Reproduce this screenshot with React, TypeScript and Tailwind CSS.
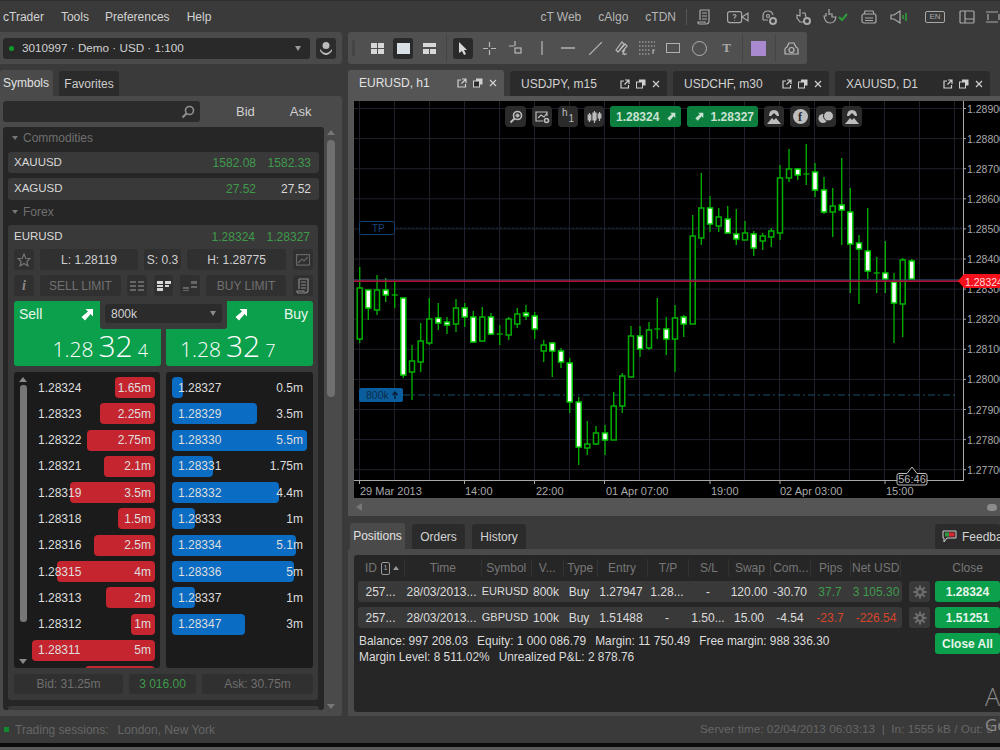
import React from "react";

// [x, wickTop, wickBottom, bodyTop, bodyBottom, filled]
const raw: [number, number, number, number, number, number][] = [
  [359.7,267,343,288,339,0],[368.3,290,320,290,308,1],[377,275,315,290,310,0],[385.7,278,302,290,295,1],[394.7,282,308,295,295,2],
  [403.3,298,378,298,375,1],[412,345,400,361,372,0],[420.7,323,372,341,362,0],[429.3,298,345,319,343,0],[438.3,303,330,318,323,1],
  [447,317,334,322,324,1],[456,299,332,308,324,0],[464.7,303,327,308,317,1],[473.3,311,342,317,342,1],[482.3,307,342,317,341,0],
  [491,313,335,317,334,1],[499.7,325,345,334,334,2],[508.7,317,340,319,335,0],[517.3,308,328,314,324,0],[526,305,320,313,315,1],
  [534.7,312,339,316,329,1],[543.7,340,362,345,351,0],[552.3,342,377,343,351,1],[561,348,368,351,362,1],[569.7,358,413,363,402,1],
  [578.7,397,465,402,447,1],[587.3,421,455,444,448,0],[596,426,445,433,444,0],[605,425,455,433,440,1],[613.7,392,440,406,440,0],
  [622.3,373,413,376,406,0],[631,326,377,336,377,0],[640,326,357,336,349,1],[649,322,350,330,348,0],[657.3,298,339,329,329,2],
  [666.3,317,355,329,339,1],[675,305,372,318,339,0],[683.7,315,337,317,324,1],[692.7,215,324,236,324,0],[701.3,173,245,208,238,0],
  [710,196,232,208,224,1],[718.7,208,232,217,226,0],[727.7,206,233,219,233,1],[736.3,209,245,234,239,1],[745,221,240,233,240,0],
  [753.7,231,256,234,248,1],[762.7,233,250,236,241,0],[771.3,228,247,231,237,0],[780,165,240,178,233,0],[789,149,182,169,178,0],
  [797.7,168,180,169,175,1],[806.3,144,185,174,174,2],[815,163,197,172,190,1],[824,177,214,190,212,1],[832.7,188,237,206,212,0],
  [841.7,158,245,205,210,1],[850.3,188,293,212,244,1],[859,235,304,243,249,1],[867.7,208,279,251,271,1],[876.7,257,293,273,273,2],
  [885.3,241,293,273,279,1],[894,273,343,282,303,1],[902.7,258,337,260,304,0],[911.7,259,280,261,279,1],
];
const priceLabels = ["1.28900","1.28800","1.28700","1.28600","1.28500","1.28400","1.28300","1.28200","1.28100","1.28000","1.27900","1.27800","1.27700"];

function Chart() {
  const hs = priceLabels.map((_, i) => 108.5 + i * 30.1);
  const vs = Array.from({ length: 18 }, (_, i) => 359.5 + i * 35);
  return (
    <svg width={646} height={397} viewBox="354 101 646 397" className="block bg-black">
      {hs.map((y) => <line key={y} x1={354} x2={963} y1={y} y2={y} stroke="#20202c" strokeWidth={1} />)}
      {vs.map((x) => <line key={x} x1={x} x2={x} y1={101} y2={480} stroke="#20202c" strokeWidth={1} />)}
      <line x1={396} x2={963} y1={228} y2={228} stroke="#1a2a48" strokeWidth={1} strokeDasharray="2 2" />
      <line x1={403} x2={958} y1={395} y2={395} stroke="#17506f" strokeWidth={1} strokeDasharray="7 3 2 3" />
      {raw.map(([x, wt, wb, bt, bb, f]) => (
        <g key={x}>
          <line x1={x} x2={x} y1={wt} y2={wb} stroke="#00a800" strokeWidth={1.4} />
          {f === 2 ? (
            <line x1={x - 3} x2={x + 3} y1={bt} y2={bt} stroke="#00a800" strokeWidth={1.4} />
          ) : (
            <rect x={x - 2.5} y={bt} width={5} height={Math.max(bb - bt, 3)} fill={f ? "#ffffff" : "#000000"} stroke={f ? "#00d000" : "#00b000"} strokeWidth={1.5} />
          )}
        </g>
      ))}
      <line x1={354} x2={960} y1={280} y2={280} stroke="#3f5f8a" strokeWidth={1} />
      <line x1={354} x2={960} y1={281.3} y2={281.3} stroke="#b01030" strokeWidth={1.4} />
      <line x1={963.5} x2={963.5} y1={101} y2={480.5} stroke="#a8a8a8" strokeWidth={1} />
      <line x1={354} x2={964} y1={480.5} y2={480.5} stroke="#a8a8a8" strokeWidth={1} />
      {priceLabels.map((l, i) => (
        <g key={l}>
          <line x1={963} x2={966} y1={hs[i]} y2={hs[i]} stroke="#a8a8a8" />
          <text x={967} y={hs[i] + 4} fill="#a9a9a9" fontSize={10.5} fontFamily="Liberation Sans, sans-serif">{l}</text>
        </g>
      ))}
      {[[359.5,"29 Mar 2013",360],[464.5,"14:00",465],[534.5,"22:00",536],[604.5,"01 Apr 07:00",606],[710,"19:00",711],[780,"02 Apr 03:00",780],[885,"15:00",886]].map(([x, t, tx]) => (
        <g key={t as string}>
          <line x1={x as number} x2={x as number} y1={480} y2={484} stroke="#a8a8a8" />
          <text x={tx as number} y={495} fill="#a9a9a9" fontSize={11} fontFamily="Liberation Sans, sans-serif">{t as string}</text>
        </g>
      ))}
      <path d="M899 473.5 H907 L912 467 L917 473.5 H925 Q927 473.5 927 475.5 V483 Q927 485 925 485 H899 Q897 485 897 483 V475.5 Q897 473.5 899 473.5 Z" fill="#000" stroke="#bdbdbd" />
      <text x={912} y={483} textAnchor="middle" fill="#b5b5b5" fontSize={11} fontFamily="Liberation Sans, sans-serif">56:46</text>
      <rect x={359.5} y={221.5} width={35} height={13} rx={2} fill="#000" stroke="#14406e" />
      <text x={372} y={232} fill="#15457a" fontSize={10} fontFamily="Liberation Sans, sans-serif">TP</text>
      <rect x={359} y={388} width={44} height={14} rx={2} fill="#0b5e9e" />
      <text x={366} y={399} fill="#0f2c48" fontSize={10.5} fontFamily="Liberation Sans, sans-serif">800k</text>
      <path d="M395 399 V393 M392.5 395 L395 392 L397.5 395" stroke="#0b1f33" strokeWidth={1.4} fill="none" />
      <path d="M958 281 L964 274 H1000 V288 H964 Z" fill="#f4111c" />
      <text x={965} y={285.5} fill="#ffd9d9" fontSize={10.5} fontFamily="Liberation Sans, sans-serif">1.28324</text>
    </svg>
  );
}

const Ico = ({ w = 16, h = 16, children, vb, className = "" }: { w?: number; h?: number; children: React.ReactNode; vb?: string; className?: string }) => (
  <svg width={w} height={h} viewBox={vb ?? `0 0 ${w} ${h}`} fill="none" stroke="currentColor" strokeWidth={1.2} className={"block shrink-0 " + className}>{children}</svg>
);

const Scroll = () => (<Ico w={16} h={18}><path d="M4 2 H13 V13 Q13 16 10 16 H3 Q2 16 2 14 H9 V15 M4 2 V12 M6 5 H11 M6 8 H11 M6 11 H11" /></Ico>);
const ArrowUR = ({ c = "#fff", s = 13 }: { c?: string; s?: number }) => (
  <svg width={s} height={s} viewBox="0 0 13 13" className="block shrink-0"><path d="M4.5 1 H12 V8.5 L9.6 6 L4 12.5 L.5 9 L7 3.4 Z" fill={c} /></svg>
);
const Gear = () => (
  <svg width={14} height={14} viewBox="0 0 14 14" className="block" fill="none" stroke="#6f6f6f">
    <circle cx={7} cy={7} r={3} strokeWidth={2} />
    <path d="M7 .5 V3 M7 11 V13.5 M.5 7 H3 M11 7 H13.5 M2.4 2.4 L4.2 4.2 M9.8 9.8 L11.6 11.6 M11.6 2.4 L9.8 4.2 M4.2 9.8 L2.4 11.6" strokeWidth={2} />
  </svg>
);
const TabIcons = () => (
  <span className="flex items-center gap-[6px] text-[#cfcfcf] ml-auto">
    <Ico w={10} h={10}><path d="M8.5 6 V9 H1 V2 H4 M5 1 H9 V5 M9 1 L4.5 5.5" /></Ico>
    <svg width={10} height={10} viewBox="0 0 10 10" className="block"><rect x={3} y={.5} width={6.5} height={6} fill="#cfcfcf" /><rect x={.5} y={3} width={6} height={6} fill="#2b2b2b" stroke="#cfcfcf" /></svg>
    <Ico w={8} h={8}><path d="M1 1 L7 7 M7 1 L1 7" /></Ico>
  </span>
);

const sell: [string, string, number][] = [
  ["1.28324","1.65m",115],["1.28323","2.25m",100],["1.28322","2.75m",87],["1.28321","2.1m",104],["1.28319","3.5m",70],["1.28318","1.5m",118],
  ["1.28316","2.5m",94],["1.28315","4m",57],["1.28313","2m",106],["1.28312","1m",131],["1.28311","5m",32],["","",85],
];
const buy: [string, string, number][] = [
  ["1.28327","0.5m",11],["1.28329","3.5m",85],["1.28330","5.5m",135],["1.28331","1.75m",41],["1.28332","4.4m",107],
  ["1.28333","1m",23],["1.28334","5.1m",124],["1.28336","5m",122],["1.28337","1m",23],["1.28347","3m",73],
];

function DepthRow({ p, v, barLeft, barW, color }: { p: string; v: string; barLeft: number; barW: number; color: string }) {
  return (
    <div className="relative h-[21px] shrink-0 flex items-center justify-between text-[12px] text-[#dedede]">
      <span className={"absolute top-0 bottom-0 rounded-[4px] " + color} style={{ left: barLeft, width: barW }} />
      <span className="relative pl-[6px]">{p}</span>
      <span className="relative pr-[4px]">{v}</span>
    </div>
  );
}

const SmallBox = ({ className = "", children }: { className?: string; children?: React.ReactNode }) => (
  <div className={"h-[21px] rounded-[3px] bg-[#303030] flex items-center justify-center text-[12px] shrink-0 " + className}>{children}</div>
);

const cols = [45, 77, 50, 32, 34, 50, 42, 40, 42, 40, 40, 52];
const headCols = [47, 77, 50, 32, 34, 50, 42, 40, 42, 40, 40, 50];
const heads = ["", "Time", "Symbol", "V...", "Type", "Entry", "T/P", "S/L", "Swap", "Com...", "Pips", "Net USD"];
const rows: [string[], string, string][] = [
  [["257...","28/03/2013...","EURUSD","800k","Buy","1.27947","1.28...","-","120.00","-30.70","37.7","3 105.30"], "text-[#3f9b4b]", "1.28324"],
  [["257...","28/03/2013...","GBPUSD","100k","Buy","1.51488","-","1.50...","15.00","-4.54","-23.7","-226.54"], "text-[#d8452a]", "1.51251"],
];

const Tool = ({ children, active = false, w = 26 }: { children: React.ReactNode; active?: boolean; w?: number }) => (
  <div className={"h-[21px] flex items-center justify-center shrink-0 rounded-[3px] " + (active ? "bg-[#2a2a2a]" : "")} style={{ width: w }}>{children}</div>
);

export default function App() {
  return (
    <div className="w-[1000px] h-[750px] overflow-hidden relative bg-[#3a3a3a] flex flex-col text-[12px] text-[#d2d2d2] font-['Liberation_Sans',Arial,sans-serif]">
      {/* menu */}
      <header className="h-[32px] shrink-0 flex items-center pl-[3px] border-t border-[#2f2f2f]">
        <span>cTrader</span><span className="ml-[17px]">Tools</span><span className="ml-[16px]">Preferences</span><span className="ml-[17px]">Help</span>
        <div className="ml-auto flex items-center text-[#b5b5b5]">
          <span>cT Web</span><span className="ml-[17px]">cAlgo</span><span className="ml-[17px]">cTDN</span>
          <span className="ml-[10px] w-px h-[16px] bg-[#555]" />
          <div className="flex items-center ml-[9px] mr-[-1px] text-[#a9a9a9]">
            <span className="w-[16px]"><Scroll /></span>
            <span className="ml-[15px]"><Ico w={22} h={14}><rect x={.6} y={1.6} width={14} height={11} rx={2} /><path d="M15 7 L21 3 V11 Z" /><path d="M6 5.5 Q7.5 3.5 9 5.5 Q9 7 7.5 7.5 V8.5 M7.5 10 V10.6" /></Ico></span>
            <span className="ml-[11px]"><Ico w={18} h={18}><path d="M3 12 V8 Q3 3 8 3 Q12 3 13 7 M3 12 H8" /><circle cx={8} cy={8} r={1.5} /><circle cx={13} cy={13} r={3} strokeWidth={2} /></Ico></span>
            <span className="ml-[16px]"><Ico w={18} h={18}><path d="M6 1 V8 L3 7 V10 L6 14 H10 M8 5 H11 L12 9" /><circle cx={13} cy={13} r={3} strokeWidth={2} /></Ico></span>
            <span className="ml-[10px] flex items-center"><Ico w={16} h={18}><path d="M7 1 V7 M4 5 L4 8 H2 Q3 15 8 15 Q13 15 14 9 H10 V6 H7" /></Ico><Ico w={10} h={10} className="text-[#2f9a3a]"><path d="M1 5 L4 8 L9 2" strokeWidth={2} /></Ico></span>
            <span className="ml-[13px]"><Ico w={16} h={16}><rect x={1} y={5} width={14} height={9} rx={2} /><path d="M3 5 L4 2 H12 L13 5 M4 9 H12 M4 11.5 H12" /></Ico></span>
            <span className="ml-[13px] flex items-center"><Ico w={12} h={14}><path d="M1 5 H4 L10 1 V13 L4 9 H1 Z" /></Ico><Ico w={6} h={10} className="text-[#2f9a3a]"><path d="M1 3 V7 M4 1 V9" strokeWidth={1.6} /></Ico></span>
            <span className="ml-[17px] w-[20px] h-[12px] border border-[#a9a9a9] rounded-[2px] text-[8px] flex items-center justify-center">EN</span>
            <span className="ml-[14px]"><Ico w={16} h={14}><rect x={1} y={1} width={14} height={12} rx={1} /><path d="M6 1 V13 M6 9 H15" /></Ico></span>
            <span className="ml-[11px]"><Ico w={15} h={14}><path d="M3 2 H12 M3 12 H12 M2 4 V10 M13 4 V10" /><path d="M0 2 H3 M0 12 H3" /></Ico></span>
          </div>
        </div>
      </header>

      {/* toolbars */}
      <div className="h-[32px] shrink-0 flex">
        <div className="w-[342px] bg-[#4a4a4a] rounded-r-[3px] flex items-center pl-[3px] pr-[6px] gap-[6px]">
          <div className="flex-1 h-[21px] bg-[#292929] rounded-[3px] flex items-center pl-[6px] pr-[9px]">
            <span className="w-[5px] h-[5px] rounded-full bg-[#0e9a2a]" />
            <span className="ml-[8px] text-[11.7px]">3010997 · Demo · USD · 1:100</span>
            <span className="ml-auto w-0 h-0 border-l-[3px] border-r-[3px] border-t-[5px] border-l-transparent border-r-transparent border-t-[#9a9a9a]" />
          </div>
          <div className="w-[20px] h-[21px] bg-[#2c2c2c] rounded-[3px] flex items-center justify-center">
            <svg width={14} height={15} viewBox="0 0 14 15" className="block"><circle cx={7} cy={4.5} r={3.5} fill="#bcbcbc" /><path d="M1 8 Q7 16 13 8 L13 10 Q7 18 1 10 Z" fill="#bcbcbc" /></svg>
          </div>
        </div>
        <div className="ml-[6px] w-[459px] bg-[#505050] rounded-[3px] flex items-center pl-[4px] text-[#b9b9b9]">
          <span className="w-[3px] h-[16px] bg-[#444] rounded-sm mr-[9px]" />
          <Tool><svg width={13} height={11} viewBox="0 0 13 11" className="block" fill="#d8d8d8"><rect width={6} height={5} /><rect x={7} width={6} height={5} /><rect y={6} width={6} height={5} /><rect x={7} y={6} width={6} height={5} /></svg></Tool>
          <span className="w-[3px]" />
          <Tool active w={20}><span className="block w-[13px] h-[11px] bg-[#d8e0e6]" /></Tool>
          <span className="w-[3px]" />
          <Tool><svg width={13} height={11} viewBox="0 0 13 11" className="block" fill="#d8d8d8"><rect width={13} height={4} /><rect y={6} width={6} height={5} /><rect x={7} y={6} width={6} height={5} /></svg></Tool>
          <span className="w-px h-[28px] bg-[#444] ml-[4px] mr-[6px]" />
          <Tool active w={20}><svg width={10} height={13} viewBox="0 0 10 13" className="block"><path d="M1 0 L9 8 H6 L8 12 L6 13 L4 9 L1 11 Z" fill="#d8d8d8" /></svg></Tool>
          <span className="w-[3px]" />
          <Tool><Ico w={13} h={13}><path d="M6.5 0 V5 M6.5 8 V13 M0 6.5 H5 M8 6.5 H13" /></Ico></Tool>
          <Tool w={28}><Ico w={14} h={14}><path d="M6 0 V5 M0 5 H5" /><rect x={6} y={7} width={6} height={5} /></Ico></Tool>
          <Tool w={24}><span className="block w-[2px] h-[14px] bg-[#8f8f8f]" /></Tool>
          <Tool w={28}><span className="block w-[14px] h-[2px] bg-[#9a9a9a]" /></Tool>
          <Tool><Ico w={13} h={13}><path d="M0 13 L13 0" /></Ico></Tool>
          <Tool><Ico w={15} h={15}><path d="M2 9 L8 1 L10 3 L4 11 Z M5 10 L11 3 L13 5 L8 11 M8 13 H13 M11 9 Q8 11 11 14" /></Ico></Tool>
          <Tool><Ico w={16} h={14}><path d="M0 1 H16 M0 5 H16 M0 9 H12 M0 13 H12" strokeDasharray="1.5 1.5" /><path d="M14 13 V9 H16" /></Ico></Tool>
          <Tool><span className="block w-[14px] h-[10px] border border-[#b0b0b0]" /></Tool>
          <Tool w={27}><span className="block w-[15px] h-[15px] border border-[#b0b0b0] rounded-full" /></Tool>
          <Tool w={27}><span className="text-[13px] font-bold text-[#aaa] font-['Liberation_Serif',serif]">T</span></Tool>
          <span className="w-px h-[28px] bg-[#444] ml-[2px] mr-[8px]" />
          <span className="w-[15px] h-[15px] bg-[#a98ad0]" />
          <span className="w-px h-[28px] bg-[#444] ml-[9px] mr-[6px]" />
          <Tool w={18}><Ico w={15} h={13}><path d="M1 12 V7 Q1 6 3 5 L5 1 H10 L12 5 Q14 6 14 7 V12 Z" /><circle cx={7.5} cy={8} r={2.5} /></Ico></Tool>
        </div>
      </div>

      {/* main */}
      <div className="mt-[6px] h-[646px] shrink-0 flex">
        {/* left column */}
        <aside className="w-[342px] shrink-0 flex flex-col">
          <div className="h-[26px] shrink-0 flex items-end">
            <div className="w-[53px] h-[26px] bg-[#4a4a4a] rounded-t-[3px] flex items-center pl-[3px] text-[#e2e2e2]">Symbols</div>
            <div className="ml-[6px] w-[60px] h-[25px] bg-[#2b2b2b] rounded-t-[3px] flex items-center justify-center text-[#cdcdcd]">Favorites</div>
          </div>
          <div className="flex-1 min-h-0 bg-[#4a4a4a] rounded-r-[3px] pt-[5px] pl-[3px] pr-[4px] pb-[6px] flex flex-col">
            <div className="h-[21px] shrink-0 flex items-center">
              <div className="w-[197px] h-[21px] bg-[#2b2b2b] rounded-[3px] flex items-center justify-end pr-[5px] text-[#8f8f8f]">
                <Ico w={14} h={14}><circle cx={8.5} cy={5.5} r={4} strokeWidth={1.6} /><path d="M5.5 8.5 L1.5 12.5" strokeWidth={2.2} /></Ico>
              </div>
              <span className="ml-[36px] text-[13px] text-[#d0d0d0]">Bid</span>
              <span className="ml-[35px] text-[13px] text-[#d0d0d0]">Ask</span>
            </div>
            <div className="mt-[5px] flex-1 min-h-0 flex">
              <div className="w-[321px] h-[583px] bg-[#262626] rounded-[3px] overflow-hidden px-[5px] flex flex-col text-[12px]">
                <div className="h-[25px] shrink-0 flex items-center pl-[4px] pb-[3px] text-[#6f6f6f]"><span className="mr-[5px] w-0 h-0 border-l-[3px] border-r-[3px] border-t-[4px] border-l-transparent border-r-transparent border-t-[#777]" />Commodities</div>
                <div className="h-[21px] shrink-0 bg-[#393939] rounded-[3px] flex items-center pl-[6px] pr-[8px]">
                  <span className="text-[#d8d8d8] text-[11.5px]">XAUUSD</span><span className="ml-auto text-[#3f9b4b]">1582.08</span><span className="w-[55px] text-right text-[#3f9b4b]">1582.33</span>
                </div>
                <div className="h-[22px] mt-[5px] shrink-0 bg-[#393939] rounded-[3px] flex items-center pl-[6px] pr-[8px]">
                  <span className="text-[#d8d8d8] text-[11.5px]">XAGUSD</span><span className="ml-auto text-[#3f9b4b]">27.52</span><span className="w-[55px] text-right text-[#d8d8d8]">27.52</span>
                </div>
                <div className="h-[25px] shrink-0 flex items-center pl-[4px] pb-[1px] text-[#6f6f6f]"><span className="mr-[5px] w-0 h-0 border-l-[3px] border-r-[3px] border-t-[4px] border-l-transparent border-r-transparent border-t-[#777]" />Forex</div>
                <div className="w-[310px] shrink-0 bg-[#393939] rounded-[3px] pl-[6px] pr-[5px] pb-[6px] flex flex-col">
                  <div className="h-[24px] shrink-0 flex items-center pr-[3px]">
                    <span className="text-[#d8d8d8] text-[11.5px]">EURUSD</span><span className="ml-auto text-[#3f9b4b]">1.28324</span><span className="w-[55px] text-right text-[#3f9b4b]">1.28327</span>
                  </div>
                  <div className="flex items-center">
                    <SmallBox className="w-[20px] text-[#777]"><svg width={14} height={14} viewBox="0 0 24 24" fill="none" stroke="#777" strokeWidth={2} className="block"><path d="M12 2 L15 9 L22 9.5 L17 14.5 L18.5 22 L12 18 L5.5 22 L7 14.5 L2 9.5 L9 9 Z" /></svg></SmallBox>
                    <SmallBox className="ml-[6px] w-[98px] text-[#cfcfcf]">L: 1.28119</SmallBox>
                    <SmallBox className="ml-[6px] w-[37px] text-[#cfcfcf]">S: 0.3</SmallBox>
                    <SmallBox className="ml-[6px] w-[99px] text-[#cfcfcf]">H: 1.28775</SmallBox>
                    <SmallBox className="ml-[7px] w-[20px] text-[#666]"><Ico w={14} h={12}><rect x={.6} y={.6} width={13} height={10.5} /><path d="M2 9 L6 5 L8 7 L12 3" /></Ico></SmallBox>
                  </div>
                  <div className="mt-[5px] flex items-center">
                    <SmallBox className="w-[20px] text-[#8a8a8a]"><span className="italic font-bold font-['Liberation_Serif',serif] text-[14px]">i</span></SmallBox>
                    <SmallBox className="ml-[6px] w-[81px] text-[#717171] text-[11px]">SELL LIMIT</SmallBox>
                    <SmallBox className="ml-[6px] w-[20px]"><svg width={14} height={10} viewBox="0 0 14 10" fill="#666" className="block"><path d="M0 0H6V2H0ZM8 0H14V2H8ZM0 4H6V6H0ZM8 4H14V6H8ZM0 8H6V10H0ZM8 8H14V10H8Z" /></svg></SmallBox>
                    <SmallBox className="ml-[7px] w-[19px] bg-[#222]"><svg width={14} height={10} viewBox="0 0 14 10" fill="#d8d8d8" className="block"><path d="M0 0H6V3H0ZM8 0H14V3H8ZM0 4H6V6H0ZM8 4H12V6H8ZM0 7H6V10H0Z" /></svg></SmallBox>
                    <SmallBox className="ml-[7px] w-[20px]"><svg width={14} height={10} viewBox="0 0 14 10" fill="#666" className="block"><path d="M8 0H14V3H8ZM0 6H6V8H0ZM8 5H14V7H8ZM0 9H6V10H0Z" /></svg></SmallBox>
                    <SmallBox className="ml-[6px] w-[80px] text-[#717171] text-[11px]">BUY LIMIT</SmallBox>
                    <SmallBox className="ml-[7px] w-[20px] text-[#8a8a8a]"><Scroll /></SmallBox>
                  </div>
                  {/* sell buy */}
                  <div className="relative mt-[5px] h-[65px] flex gap-[5px]">
                    <div className="w-[147px] bg-[#0ba04c] rounded-[3px] flex flex-col text-white">
                      <div className="h-[27px] flex items-center pl-[5px] text-[14px] text-[#e9f7ee]">Sell</div>
                      <div className="flex-1 flex items-baseline justify-end pr-[13px] pt-[3px] font-['Open_Sans',sans-serif] font-light leading-none">
                        <span className="text-[21px]">1.28</span><span className="ml-[5px] text-[30px]">32</span><span className="ml-[5px] text-[18px]">4</span>
                      </div>
                    </div>
                    <div className="w-[147px] bg-[#0ba04c] rounded-[3px] flex flex-col text-white">
                      <div className="h-[27px] flex items-center justify-end pr-[5px] text-[14px] text-[#e9f7ee]">Buy</div>
                      <div className="flex-1 flex items-baseline pl-[14px] pt-[3px] font-['Open_Sans',sans-serif] font-light leading-none">
                        <span className="text-[21px]">1.28</span><span className="ml-[5px] text-[30px]">32</span><span className="ml-[5px] text-[18px]">7</span>
                      </div>
                    </div>
                    <div className="absolute left-[86px] top-0 w-[127px] h-[28px] bg-[#393939] rounded-b-[3px] pl-[5px] pr-[5px] pt-[3px]">
                      <div className="h-[19px] bg-[#2b2b2b] rounded-[3px] flex items-center pl-[6px] pr-[6px] text-[#d2d2d2]">
                        800k<span className="ml-auto w-0 h-0 border-l-[3px] border-r-[3px] border-t-[5px] border-l-transparent border-r-transparent border-t-[#8a8a8a]" />
                      </div>
                    </div>
                    <span className="absolute left-[67px] top-[7px]"><ArrowUR /></span>
                    <span className="absolute left-[221px] top-[7px]"><ArrowUR /></span>
                  </div>
                  {/* depth */}
                  <div className="mt-[6px] h-[296px] flex gap-[6px]">
                    <div className="w-[146px] bg-[#1b1b1b] rounded-[3px] overflow-hidden flex">
                      <div className="w-[18px] shrink-0 flex flex-col items-center pt-[5px] pb-[4px]">
                        <span className="w-0 h-0 border-l-[4px] border-r-[4px] border-b-[5px] border-l-transparent border-r-transparent border-b-[#8a8a8a]" />
                        <span className="mt-[3px] w-[7px] h-[237px] bg-[#767676] rounded-[3px]" />
                        <span className="mt-auto w-0 h-0 border-l-[4px] border-r-[4px] border-t-[5px] border-l-transparent border-r-transparent border-t-[#8a8a8a]" />
                      </div>
                      <div className="w-[123px] pt-[5px] flex flex-col gap-[5.3px]">
                        {sell.map(([p, v, x]) => <DepthRow key={p + v} p={p} v={v} barLeft={x - 32} barW={155 - x} color="bg-[#c4252e]" />)}
                      </div>
                    </div>
                    <div className="w-[147px] bg-[#1b1b1b] rounded-[3px] overflow-hidden pl-[6px] pr-[6px] pt-[5px] flex flex-col gap-[5.3px]">
                      {buy.map(([p, v, w]) => <DepthRow key={p} p={p} v={v} barLeft={0} barW={w} color="bg-[#0a6cc2]" />)}
                    </div>
                  </div>
                  <div className="mt-[6px] flex gap-[6px]">
                    <div className="w-[109px] h-[20px] bg-[#303030] rounded-[3px] flex items-center justify-center text-[#6f6f6f]">Bid: 31.25m</div>
                    <div className="w-[67px] h-[20px] bg-[#303030] rounded-[3px] flex items-center justify-center text-[#3f9b4b]">3 016.00</div>
                    <div className="w-[111px] h-[20px] bg-[#303030] rounded-[3px] flex items-center justify-center text-[#6f6f6f]">Ask: 30.75m</div>
                  </div>
                </div>
                <div className="mt-[6px] h-[21px] shrink-0 bg-[#393939] rounded-[3px]" />
              </div>
              <div className="flex-1 flex flex-col items-center pt-[3px] pb-[1px]">
                <span className="w-0 h-0 border-l-[4px] border-r-[4px] border-b-[5px] border-l-transparent border-r-transparent border-b-[#777]" />
                <span className="mt-[5px] w-[8px] h-[257px] bg-[#707070] rounded-[4px]" />
                <span className="mt-auto w-0 h-0 border-l-[4px] border-r-[4px] border-t-[5px] border-l-transparent border-r-transparent border-t-[#777]" />
              </div>
            </div>
          </div>
        </aside>

        {/* right column */}
        <main className="ml-[6px] flex-1 min-w-0 flex flex-col overflow-hidden">
          <div className="h-[26px] shrink-0 flex items-end">
            <div className="w-[156px] h-[26px] shrink-0 bg-[#555] rounded-t-[3px] flex items-center pl-[11px] pr-[7px] text-[#e2e2e2]">EURUSD, h1<TabIcons /></div>
            {[["USDJPY, m15", 157], ["USDCHF, m30", 156], ["XAUUSD, D1", 155]].map(([t, w]) => (
              <div key={t as string} className="ml-[6px] h-[25px] shrink-0 bg-[#2b2b2b] rounded-t-[3px] flex items-center pl-[11px] pr-[7px] text-[#d2d2d2]" style={{ width: w as number }}>{t as string}<TabIcons /></div>
            ))}
          </div>
          <div className="relative h-[402px] shrink-0 bg-[#555] pt-[5px] pl-[6px]">
            <Chart />
            {/* floating chart toolbar */}
            <div className="absolute left-[157px] top-[10px] flex items-center gap-[6px] text-[#bdbdbd]">
              <div className="w-[21px] h-[21px] bg-[#2b2b2b] rounded-[4px] flex items-center justify-center"><Ico w={14} h={14}><circle cx={8.5} cy={5.5} r={4} strokeWidth={1.6} /><path d="M5.5 8.5 L1.5 12.5 M6.5 5.5 H10.5 M8.5 3.5 V7.5" strokeWidth={1.8} /></Ico></div>
              <div className="w-[20px] h-[21px] bg-[#2b2b2b] rounded-[4px] flex items-center justify-center"><Ico w={15} h={14}><path d="M8 11 H1 V2 H12 V6 M3 8 L6 5 L9 7 L12 3" /><circle cx={11.5} cy={10.5} r={2} strokeWidth={1.6} /></Ico></div>
              <div className="w-[20px] h-[21px] bg-[#2b2b2b] rounded-[4px] text-[10px] leading-none relative"><span className="absolute left-[4px] top-[2px]">h</span><span className="absolute right-[4px] bottom-[3px]">1</span></div>
              <div className="w-[20px] h-[21px] bg-[#2b2b2b] rounded-[4px] flex items-center justify-center"><Ico w={15} h={14}><path d="M2.5 3 V12 M7.5 1 V13 M12.5 2 V11" /><path d="M1.2 5 H3.8 V10 H1.2 Z M6 3 H9 V10 H6 Z M11.2 4 H13.8 V8 H11.2 Z" fill="currentColor" /></Ico></div>
              <div className="w-[71px] h-[21px] bg-[#0c7f3f] rounded-[3px] flex items-center pl-[6px] pr-[5px] text-[#c9e3d3] font-bold text-[12px]">1.28324<span className="ml-auto"><ArrowUR c="#c9e3d3" s={9} /></span></div>
              <div className="w-[71px] h-[21px] bg-[#0c7f3f] rounded-[3px] flex items-center pl-[8px] pr-[4px] text-[#c9e3d3] font-bold text-[12px]"><ArrowUR c="#c9e3d3" s={9} /><span className="ml-auto">1.28327</span></div>
              {[0, 1, 2, 3].map((i) => (
                <div key={i} className="w-[20px] h-[21px] bg-[#2b2b2b] rounded-[4px] flex items-center justify-center">
                  {i === 1 ? (
                    <span className="w-[15px] h-[15px] rounded-full bg-[#bdbdbd] text-[#2b2b2b] font-bold text-[12px] flex items-center justify-center font-['Liberation_Serif',serif]">f</span>
                  ) : i === 2 ? (
                    <svg width={16} height={14} viewBox="0 0 16 14" className="block" fill="#bdbdbd"><circle cx={5} cy={8.5} r={4.5} /><circle cx={10.5} cy={6} r={5} stroke="#2b2b2b" /></svg>
                  ) : (
                    <svg width={16} height={16} viewBox="0 0 16 16" className="block" fill="#bdbdbd"><path d="M3 7 Q3 1 8 1 Q13 1 13 7 H11 L8 4 L5 7 Z M1 15 L6 9 L8 11 L10 9 L15 15 Z" /></svg>
                  )}
                </div>
              ))}
            </div>
          </div>
          <div className="h-[18px] shrink-0 bg-[#555] flex items-center pl-[8px] pr-[3px]">
            <span className="w-0 h-0 border-t-[4px] border-b-[4px] border-r-[6px] border-t-transparent border-b-transparent border-r-[#777]" />
            <span className="ml-auto w-[10px] h-[7px] rounded-full bg-[#8c8c8c]" />
          </div>

          {/* positions */}
          <div className="mt-[7px] h-[26px] shrink-0 flex items-end pl-[2px]">
            <div className="w-[55px] h-[26px] bg-[#4a4a4a] rounded-t-[3px] flex items-center justify-center text-[#e2e2e2]">Positions</div>
            <div className="ml-[7px] w-[53px] h-[25px] bg-[#2b2b2b] rounded-t-[3px] flex items-center justify-center">Orders</div>
            <div className="ml-[7px] w-[54px] h-[25px] bg-[#2b2b2b] rounded-t-[3px] flex items-center justify-center">History</div>
            <div className="ml-auto w-[65px] h-[25px] bg-[#2b2b2b] rounded-t-[3px] flex items-center pl-[7px] overflow-hidden">
              <svg width={15} height={13} viewBox="0 0 15 13" className="block shrink-0"><path d="M1 1 H14 V8 H5 L2 12 V8 H1 Z" fill="#2b2b2b" stroke="#cfcfcf" /><rect x={3} y={2.5} width={4} height={4} fill="#2e9a3f" /><rect x={7} y={2.5} width={5.5} height={4} fill="#d9262e" /></svg>
              <span className="ml-[5px] whitespace-nowrap">Feedback</span>
            </div>
          </div>
          <div className="h-[167px] shrink-0 bg-[#4a4a4a] pt-[6px] pl-[6px] pb-[4px]">
            <div className="h-full bg-[#262626] rounded-l-[3px] pl-[4px] flex flex-col">
              <div className="h-[26px] shrink-0 flex items-center text-[#767676]">
                <div className="w-[47px] flex items-center pl-[7px] border-r border-[#333] h-[18px]">
                  <span>ID</span>
                  <span className="ml-[4px] w-[9px] h-[13px] border border-[#9a9a9a] rounded-[2px] text-[8px] leading-none flex items-center justify-center text-[#9a9a9a]">1</span>
                  <span className="ml-[3px] w-0 h-0 border-l-[3px] border-r-[3px] border-b-[4px] border-l-transparent border-r-transparent border-b-[#9a9a9a]" />
                </div>
                {heads.slice(1).map((h, i) => (
                  <div key={h} className="h-[18px] flex items-center justify-center border-r border-[#333]" style={{ width: headCols[i + 1] }}>{h}</div>
                ))}
                <div className="ml-[34px] w-[65px] text-center">Close</div>
              </div>
              {rows.map(([cells, cl, close], ri) => (
                <div key={ri} className="mb-[5px] h-[21px] shrink-0 flex items-center">
                  <div className="h-[21px] bg-[#393939] rounded-[3px] flex items-center text-[#dcdcdc]">
                    {cells.map((c, i) => (
                      <div key={i} className={"text-center whitespace-nowrap " + (i >= 10 ? cl : "") + (i === 2 ? " text-[11px]" : "")} style={{ width: cols[i] }}>{c}</div>
                    ))}
                  </div>
                  <div className="ml-[7px] w-[21px] h-[21px] bg-[#393939] rounded-[3px] flex items-center justify-center"><Gear /></div>
                  <div className="ml-[5px] w-[65px] h-[21px] bg-[#0ba04c] rounded-[3px] flex items-center justify-center font-bold text-[#e5f5ea]">{close}</div>
                </div>
              ))}
              <div className="flex items-start">
                <div className="w-[577px] text-[#dcdcdc] text-[11.9px] leading-[16px] pl-[1px] flex flex-col">
                  <div className="flex gap-[9px]"><span>Balance: 997 208.03</span><span>Equity: 1 000 086.79</span><span>Margin: 11 750.49</span><span>Free margin: 988 336.30</span></div>
                  <div className="flex gap-[9px]"><span>Margin Level: 8 511.02%</span><span>Unrealized P&amp;L: 2 878.76</span></div>
                </div>
                <div className="w-[65px] h-[21px] bg-[#0ba04c] rounded-[3px] flex items-center justify-center font-bold text-[#e5f5ea] whitespace-nowrap">Close All</div>
              </div>
            </div>
          </div>
        </main>
      </div>

      {/* status */}
      <footer className="h-[27px] shrink-0 flex items-center pl-[4px] text-[#666]">
        <span className="w-[5px] h-[5px] bg-[#0e8a2a]" />
        <span className="ml-[6px]">Trading sessions:</span><span className="ml-[9px]">London, New York</span>
        <span className="ml-auto whitespace-nowrap w-[300px] overflow-hidden text-[11.8px]">Server time: 02/04/2013 06:03:13&nbsp;&nbsp;|&nbsp;&nbsp;In: 1555 kB / Out: 3</span>
      </footer>
      <div className="h-[4px] shrink-0 bg-[#0c0c0c]" />
      <div className="flex-1 bg-[#5a5a5a]" />

      {/* watermark overlay */}
      <span className="absolute left-[985px] top-[684px] text-[25px] text-[#8a8a8a] leading-none font-['Open_Sans',sans-serif] font-light whitespace-nowrap">Ac</span>
      <span className="absolute left-[985px] top-[716px] text-[17px] text-[#8a8a8a] leading-none font-['Open_Sans',sans-serif] whitespace-nowrap">Go</span>
    </div>
  );
}
